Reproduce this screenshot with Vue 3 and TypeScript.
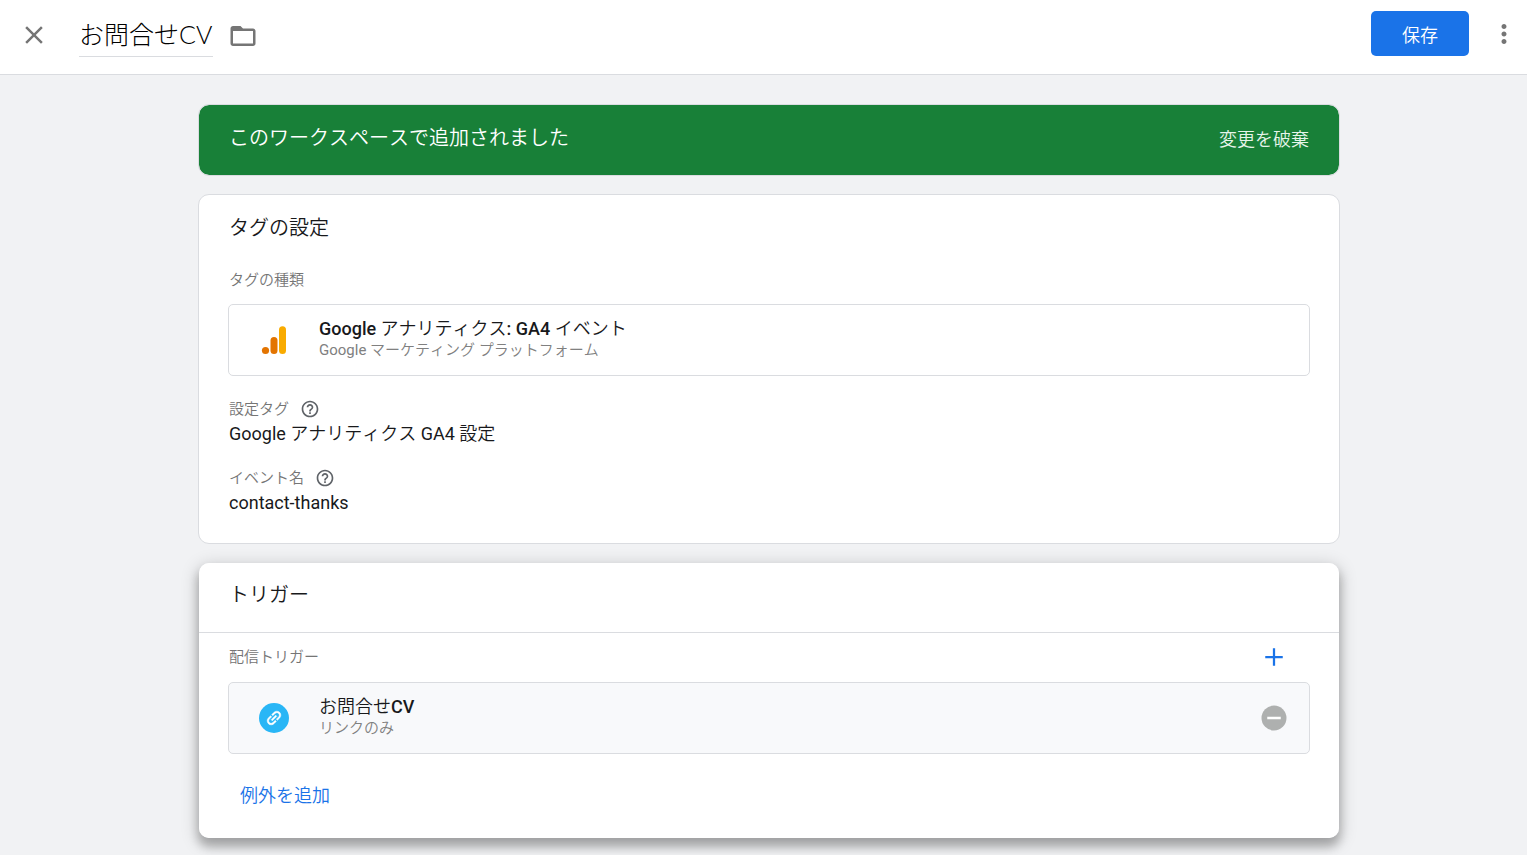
<script setup lang="ts">
import { ref } from 'vue'

interface Field {
  label: string
  value: string
}

const tagName = ref('お問合せCV')

const fields: Field[] = [
  { label: '設定タグ', value: 'Google アナリティクス GA4 設定' },
  { label: 'イベント名', value: 'contact-thanks' },
]

// Splits text into Latin and Japanese runs so each can carry its own weight.
function runs(text: string): { text: string; latin: boolean }[] {
  return (text.match(/[\x20-\x7e]+|[^\x20-\x7e]+/g) ?? []).map((part) => ({
    text: part,
    latin: /^[\x20-\x7e]/.test(part),
  }))
}
</script>

<template>
  <div class="page">
    <header class="topbar">
      <button class="icon-button" type="button" aria-label="閉じる">
        <svg viewBox="0 0 24 24" width="30" height="30"><path d="M19 6.400 17.600 5 12 10.600 6.400 5 5 6.400 10.600 12 5 17.600 6.400 19 12 13.400 17.600 19 19 17.600 13.400 12z" /></svg>
      </button>
      <input v-model="tagName" class="title" type="text" aria-label="タグ名" />
      <button class="icon-button folder" type="button" aria-label="フォルダ">
        <svg viewBox="0 0 24 24" width="30" height="30"><path d="M20 6h-8l-2-2H4c-1.100 0-1.990.9-1.990 2L2 18c0 1.100.9 2 2 2h16c1.100 0 2-.9 2-2V8c0-1.100-.9-2-2-2zm0 12H4V8h16v10z" /></svg>
      </button>
      <span class="spacer"></span>
      <div class="actions">
        <button class="save" type="button">保存</button>
        <button class="icon-button" type="button" aria-label="その他">
          <svg viewBox="0 0 24 24" width="30" height="30"><path d="M12 8c1.100 0 2-.9 2-2s-.9-2-2-2-2 .9-2 2 .9 2 2 2zm0 2c-1.100 0-2 .9-2 2s.9 2 2 2 2-.9 2-2-.9-2-2-2zm0 6c-1.100 0-2 .9-2 2s.9 2 2 2 2-.9 2-2-.9-2-2-2z" /></svg>
        </button>
      </div>
    </header>

    <main class="content">
      <section class="banner">
        <p class="banner-text">このワークスペースで追加されました</p>
        <button class="discard" type="button">変更を破棄</button>
      </section>

      <section class="card">
        <h2 class="heading">タグの設定</h2>
        <p class="label type-label">タグの種類</p>
        <button class="item" type="button">
          <span class="item-icon">
            <svg viewBox="0 0 30 30" width="30" height="30">
              <circle cx="6.500" cy="25.500" r="3.600" fill="#e37400" />
              <rect x="11.500" y="12" width="7" height="17" rx="3.500" fill="#e37400" />
              <rect x="20" y="1.200" width="7" height="27.800" rx="3.500" fill="#f9ab00" />
            </svg>
          </span>
          <span class="item-text">
            <span class="item-name"><span v-for="(r, i) in runs('Google アナリティクス: GA4 イベント')" :key="i" :class="{ medium: r.latin }">{{ r.text }}</span></span>
            <span class="item-sub"><span v-for="(r, i) in runs('Google マーケティング プラットフォーム')" :key="i" :class="{ latin: r.latin }">{{ r.text }}</span></span>
          </span>
        </button>
        <dl class="fields">
          <div v-for="f in fields" :key="f.label" class="field">
            <dt class="label field-label">
              {{ f.label }}
              <button class="icon-button help" type="button" aria-label="ヘルプ">
                <svg viewBox="0 0 24 24" width="20" height="20"><path d="M11 18h2v-2h-2v2zm1-16C6.480 2 2 6.480 2 12s4.480 10 10 10 10-4.480 10-10S17.520 2 12 2zm0 18c-4.410 0-8-3.590-8-8s3.590-8 8-8 8 3.590 8 8-3.590 8-8 8zm0-14c-2.210 0-4 1.790-4 4h2c0-1.100.9-2 2-2s2 .9 2 2c0 2-3 1.750-3 5h2c0-2.250 3-2.500 3-5 0-2.210-1.790-4-4-4z" /></svg>
              </button>
            </dt>
            <dd class="value"><span v-for="(r, i) in runs(f.value)" :key="i" :class="{ latin: r.latin }">{{ r.text }}</span></dd>
          </div>
        </dl>
      </section>

      <section class="card raised">
        <h2 class="heading trigger-heading">トリガー</h2>
        <div class="trigger-row">
          <p class="label">配信トリガー</p>
          <button class="icon-button add" type="button" aria-label="追加">
            <svg viewBox="0 0 24 24" width="30" height="30"><path d="M19 12.900h-6.100V19h-1.800v-6.100H5v-1.800h6.100V5h1.800v6.100H19z" /></svg>
          </button>
        </div>
        <div class="item filled">
          <span class="item-icon">
            <svg viewBox="0 0 30 30" width="30" height="30">
              <circle cx="15" cy="15" r="15" fill="#29b6f6" />
              <g transform="translate(15 15) rotate(-45) scale(.8) translate(-12 -12)" fill="#fff" stroke="#fff" stroke-width=".6">
                <path d="M3.900 12c0-1.710 1.390-3.100 3.100-3.100h4V7H7c-2.760 0-5 2.240-5 5s2.240 5 5 5h4v-1.900H7c-1.710 0-3.100-1.390-3.100-3.100zM8 13h8v-2H8v2zm9-6h-4v1.900h4c1.710 0 3.100 1.390 3.100 3.100s-1.390 3.100-3.100 3.100h-4V17h4c2.760 0 5-2.240 5-5s-2.240-5-5-5z" />
              </g>
            </svg>
          </span>
          <span class="item-text">
            <span class="item-name"><span v-for="(r, i) in runs('お問合せCV')" :key="i" :class="{ medium: r.latin }">{{ r.text }}</span></span>
            <span class="item-sub">リンクのみ</span>
          </span>
          <button class="icon-button remove" type="button" aria-label="削除">
            <svg viewBox="0 0 24 24" width="30" height="30">
              <circle cx="12" cy="12" r="10" />
              <rect x="6.600" y="11" width="10.800" height="2" fill="#fff" />
            </svg>
          </button>
        </div>
        <a class="exception" href="#">例外を追加</a>
      </section>
    </main>
  </div>
</template>

<style>
body {
  margin: 0;
  background: #f1f2f4;
}
</style>

<style scoped>
.page {
  box-sizing: border-box;
  min-height: 100vh;
  background: #f1f2f4;
  color: #18191b;
  font-family: Roboto, "Noto Sans CJK JP", sans-serif;
  font-weight: 350;
  font-kerning: none;
}

button,
input {
  margin: 0;
  padding: 0;
  border: 0;
  background: none;
  color: inherit;
  font: inherit;
  font-kerning: none;
}

button {
  cursor: pointer;
}

p,
h2,
dl,
dd {
  margin: 0;
}

svg {
  display: block;
}

.latin {
  font-weight: 400;
}

.medium {
  font-weight: 500;
}

.topbar {
  display: flex;
  align-items: center;
  box-sizing: border-box;
  height: 75px;
  padding: 0 8px 4px 19px;
  border-bottom: 1px solid #dadce0;
  background: #fff;
}

.icon-button {
  flex: none;
  color: #757575;
}

.icon-button svg {
  fill: currentColor;
}

.folder {
  padding-top: 2px;
}

.title {
  box-sizing: border-box;
  width: 134px;
  height: 43px;
  margin: 0 15px 0 30px;
  padding-bottom: 4px;
  border-bottom: 1px solid #dadce0;
  color: #000;
  font-family: Lato, "Noto Sans CJK JP", sans-serif;
  font-size: 25px;
  font-weight: 300;
  outline: none;
}

.spacer {
  flex: 1;
}

.actions {
  display: flex;
  align-items: center;
  gap: 20px;
  padding-bottom: 3px;
}

.save {
  width: 98px;
  height: 45px;
  border-radius: 5px;
  background: #1a73e8;
  color: #fff;
  font-size: 18px;
}

.content {
  display: flex;
  flex-direction: column;
  gap: 18px;
  padding: 29px 187px 16px 198px;
}

.banner {
  display: flex;
  align-items: center;
  justify-content: space-between;
  box-sizing: border-box;
  height: 72px;
  padding: 0 30px 4px;
  border: 1px solid #dadce0;
  border-radius: 11px;
  background: #188038;
  background-clip: padding-box;
  color: #fff;
}

.banner-text {
  padding-bottom: 4px;
  font-size: 20px;
}

.discard {
  color: #e6f4ea;
  font-size: 18px;
}

.card {
  border: 1px solid #dadce0;
  border-radius: 11px;
  background: #fff;
  padding: 0 30px;
}

.heading {
  padding-top: 18px;
  font-size: 20px;
  font-weight: 350;
  line-height: 30px;
}

.label {
  color: #757575;
  font-size: 15px;
  line-height: 20px;
}

.type-label {
  margin: 27px 0 14px;
}

.item {
  display: flex;
  align-items: center;
  box-sizing: border-box;
  width: calc(100% + 2px);
  height: 72px;
  margin: 0 -1px;
  padding: 0 20px 0 30px;
  border: 1px solid #dadce0;
  border-radius: 5px;
  text-align: left;
}

.filled {
  background: #f8f9fb;
}

.item-icon {
  margin-right: 30px;
}

.item-text {
  display: flex;
  flex: 1;
  flex-direction: column;
  padding-bottom: 2px;
}

.item-name {
  font-size: 18px;
  line-height: 22px;
}

.item-sub {
  color: #808080;
  font-size: 15px;
  line-height: 20px;
}

.fields {
  display: flex;
  flex-direction: column;
  gap: 21px;
  padding: 23px 0 27px;
}

.field-label {
  display: flex;
  align-items: center;
  gap: 11px;
  margin-bottom: 2px;
}

.help {
  color: #5f6368;
}

.value {
  font-size: 18px;
  line-height: 26px;
}

.raised {
  border-color: transparent;
  background-clip: padding-box;
  box-shadow: 0 8px 10px rgba(0, 0, 0, 0.22), 0 4px 18px rgba(0, 0, 0, 0.2);
}

.trigger-heading {
  margin: 0 -30px;
  padding: 17px 30px 22px;
  border-bottom: 1px solid #dadce0;
}

.trigger-row {
  display: flex;
  align-items: center;
  justify-content: space-between;
  box-sizing: border-box;
  height: 49px;
  padding: 0 20px 2px 0;
}

.add {
  color: #1a73e8;
}

.remove {
  color: #aeb0af;
}

.exception {
  display: inline-block;
  margin: 28px 0 28px 11px;
  color: #1a73e8;
  font-size: 18px;
  line-height: 28px;
  text-decoration: none;
}
</style>
